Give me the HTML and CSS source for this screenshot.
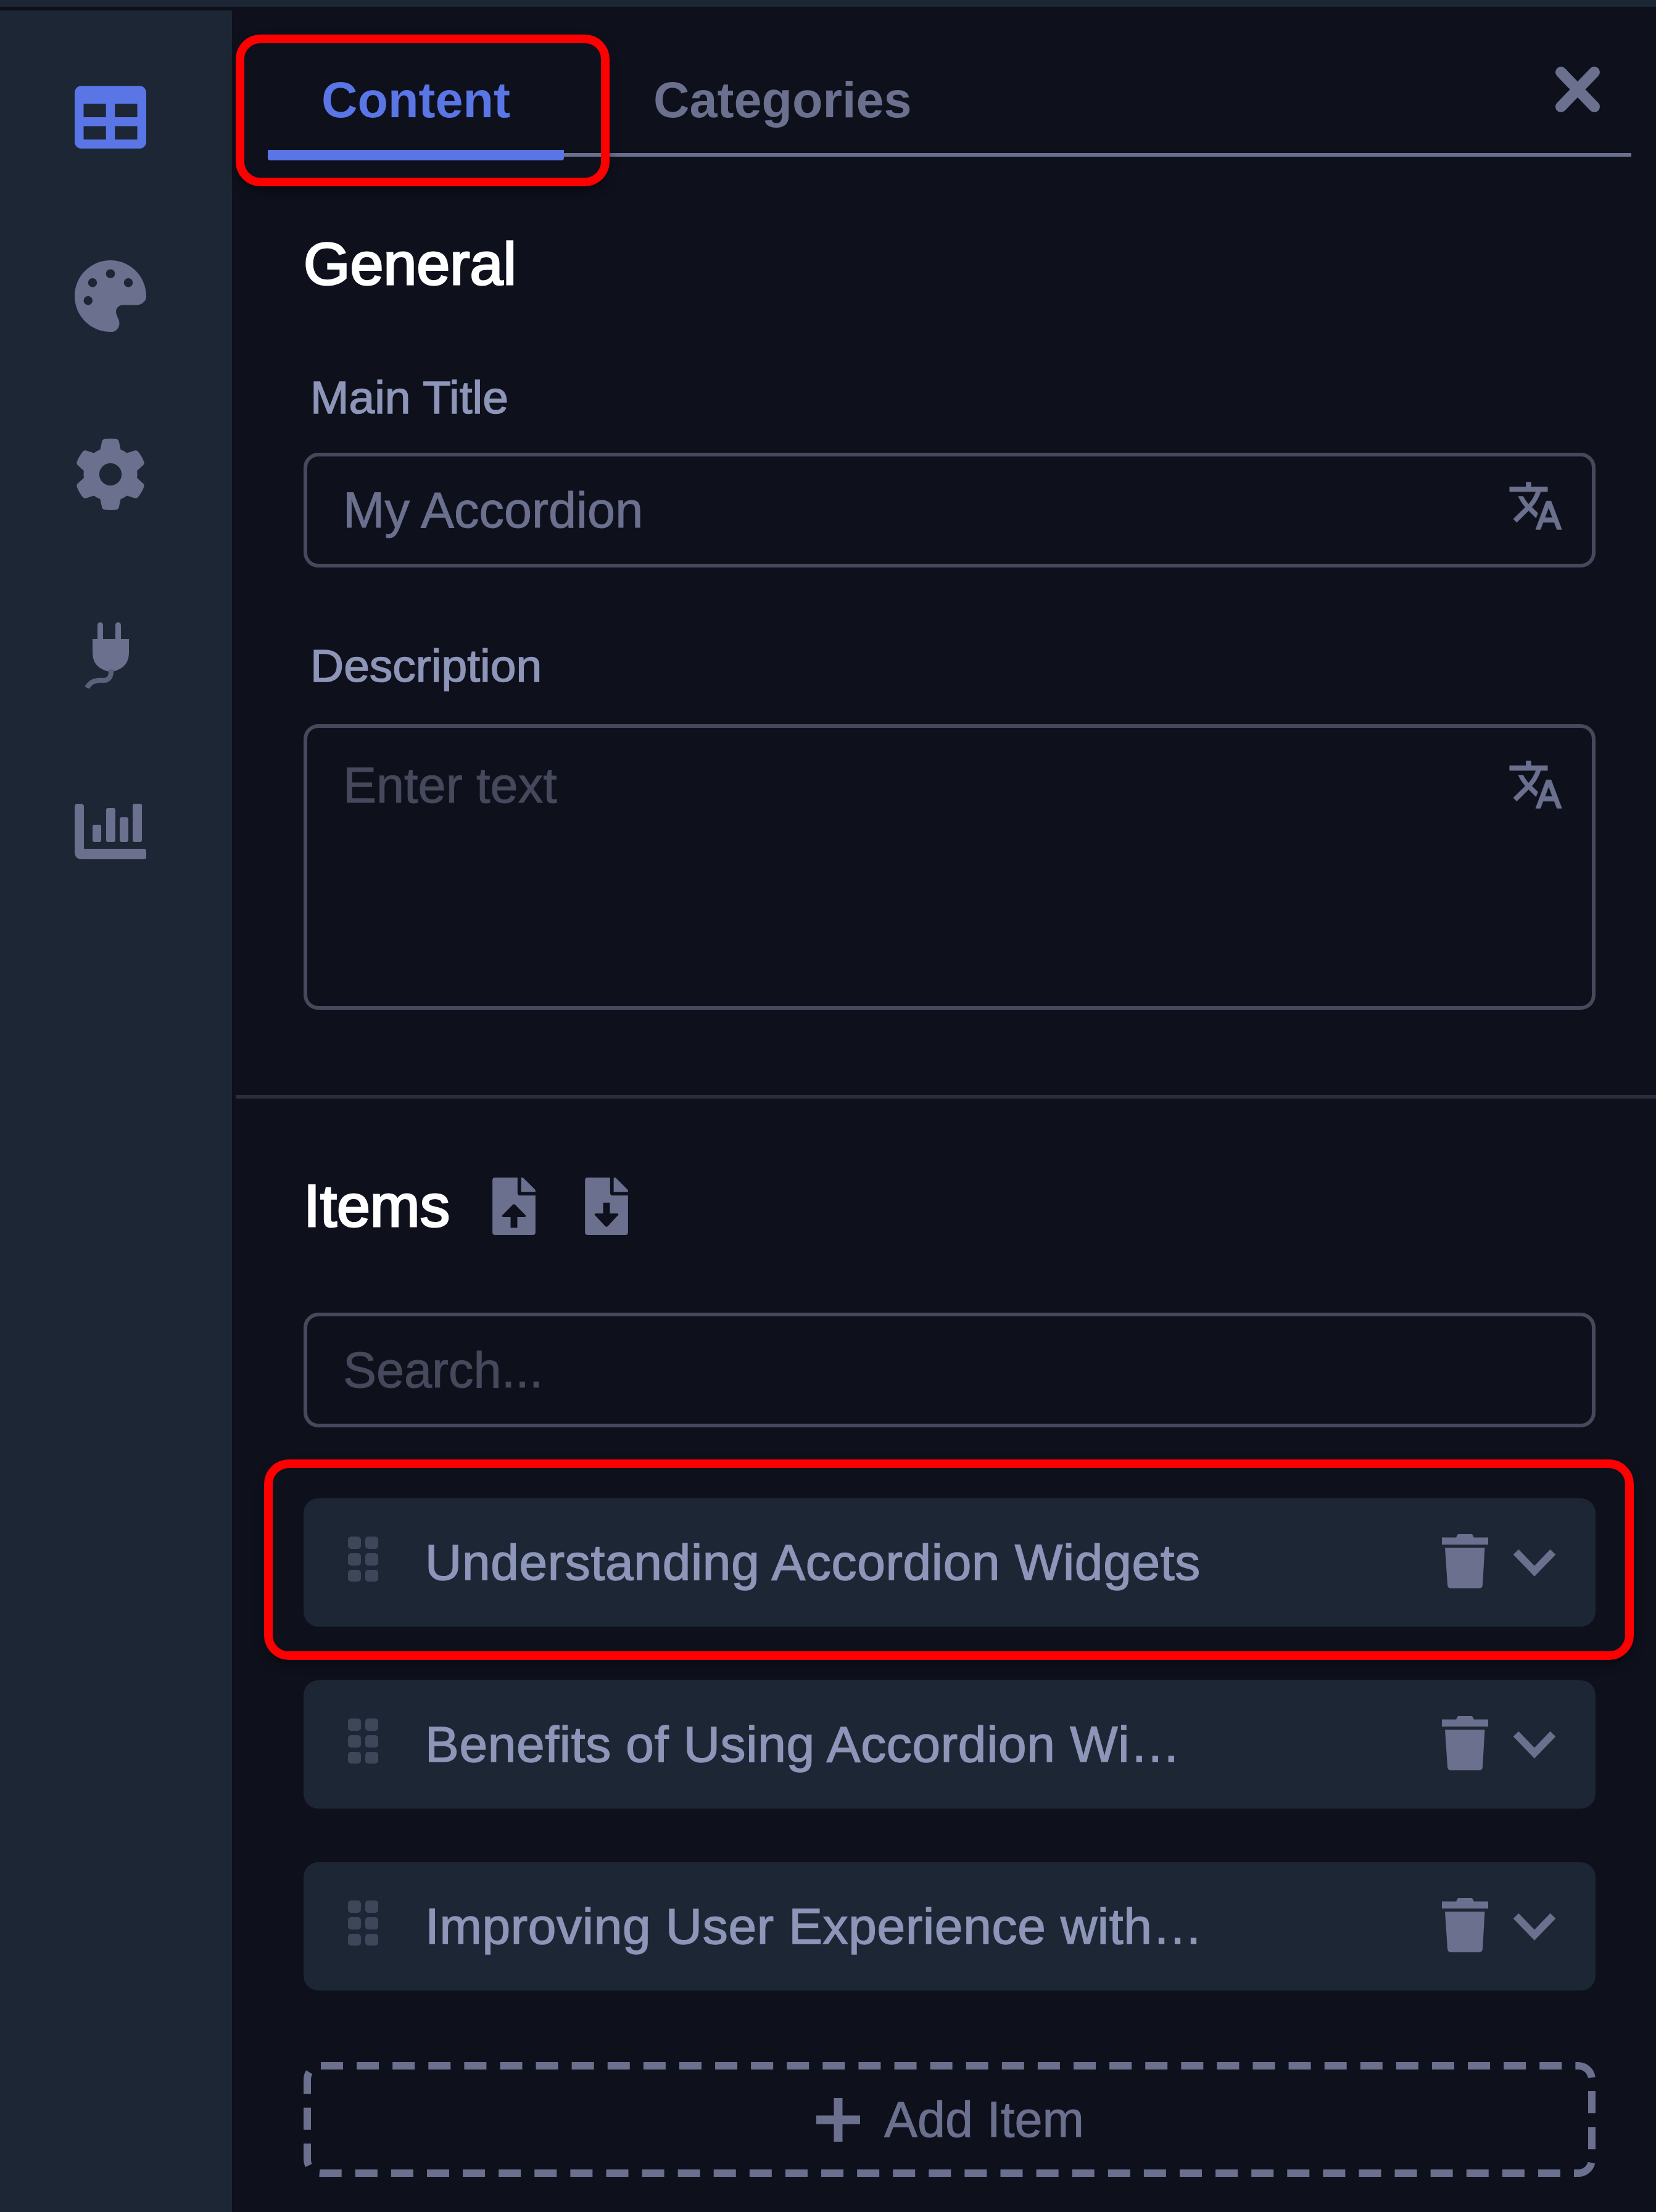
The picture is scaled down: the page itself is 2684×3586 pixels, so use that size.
FILE: index.html
```html
<!DOCTYPE html>
<html lang="en">
<head>
    <meta charset="UTF-8">
    <meta name="viewport" content="width=device-width, initial-scale=1.0">
    <title>Accordion Editor</title>
    <link rel="stylesheet" href="styles.css">
</head>
<body>
    <!-- shared icons -->
    <svg class="defs" aria-hidden="true">
        <symbol id="translate" viewBox="0 0 24 24">
            <path d="M12.87 15.07l-2.54-2.51.03-.03c1.74-1.94 2.98-4.17 3.71-6.53H17V4h-7V2H8v2H1v1.99h11.17C11.5 7.92 10.44 9.75 9 11.35 8.07 10.32 7.3 9.19 6.69 8h-2c.73 1.63 1.73 3.17 2.98 4.56l-5.09 5.02L4 19l5-5 3.11 3.11.76-2.04zM18.5 10h-2L12 22h2l1.12-3h4.75L21 22h2l-4.5-12zm-2.62 7l1.62-4.33L19.12 17h-3.24z"/>
        </symbol>
        <symbol id="grip" viewBox="0 0 58 74">
            <rect x="3" y="0" width="21" height="20" rx="5"/>
            <rect x="31" y="0" width="21" height="20" rx="5"/>
            <rect x="3" y="27" width="21" height="20" rx="5"/>
            <rect x="31" y="27" width="21" height="20" rx="5"/>
            <rect x="3" y="54" width="21" height="19" rx="5"/>
            <rect x="31" y="54" width="21" height="19" rx="5"/>
        </symbol>
        <symbol id="trash" viewBox="0 0 75 88">
            <path d="M0 5.5h23l3-5.5h23l3 5.5h23V17H0zM5 22h64.500l-3.500 60q-.4 6-6 6H15q-5.600 0-6-6z"/>
        </symbol>
        <symbol id="chevron" viewBox="0 0 70 46">
            <path d="M5 6l30 31 30-31" class="line"/>
        </symbol>
    </svg>

    <div class="topbar"></div>
    <div class="app">
        <aside class="sidebar">
            <svg class="active" viewBox="0 0 512 512"><path d="M464 32H48C21.490 32 0 53.490 0 80v352c0 26.510 21.490 48 48 48h416c26.510 0 48-21.490 48-48V80c0-26.510-21.490-48-48-48zM224 416H64v-96h160v96zm0-160H64v-96h160v96zm224 160H288v-96h160v96zm0-160H288v-96h160v96z"/></svg>
            <svg viewBox="0 0 512 512"><path d="M512 256c0 .9 0 1.800 0 2.700c-.4 36.500-33.600 61.300-70.100 61.300H344c-26.500 0-48 21.500-48 48c0 3.400 .4 6.700 1 9.900c2.100 10.200 6.500 20 10.800 29.900c6.100 13.800 12.100 27.500 12.100 42c0 31.800-21.600 60.700-53.400 62c-3.500 .1-7 .2-10.600 .2C114.600 512 0 397.400 0 256S114.600 0 256 0S512 114.600 512 256zM128 288a32 32 0 1 0 -64 0 32 32 0 1 0 64 0zm0-96a32 32 0 1 0 0-64 32 32 0 1 0 0 64zM288 96a32 32 0 1 0 -64 0 32 32 0 1 0 64 0zm96 96a32 32 0 1 0 0-64 32 32 0 1 0 0 64z"/></svg>
            <svg viewBox="0 0 512 512"><path d="M495.900 166.600c3.200 8.700 .5 18.400-6.400 24.600l-43.300 39.400c1.100 8.300 1.700 16.800 1.700 25.400s-.6 17.100-1.700 25.400l43.300 39.400c6.900 6.200 9.600 15.900 6.400 24.600c-4.400 11.900-9.700 23.300-15.800 34.300l-4.700 8.100c-6.600 11-14 21.400-22.100 31.200c-5.900 7.200-15.700 9.600-24.500 6.800l-55.700-17.700c-13.400 10.300-28.200 18.900-44 25.400l-12.500 57.100c-2 9.100-9 16.300-18.200 17.800c-13.800 2.300-28 3.500-42.500 3.500s-28.700-1.200-42.500-3.500c-9.200-1.500-16.200-8.700-18.200-17.800l-12.500-57.100c-15.800-6.500-30.600-15.100-44-25.400L83.100 425.900c-8.800 2.800-18.600 .3-24.500-6.800c-8.100-9.800-15.500-20.200-22.100-31.200l-4.700-8.100c-6.100-11-11.400-22.400-15.800-34.300c-3.200-8.700-.5-18.400 6.400-24.600l43.300-39.400C64.600 273.100 64 264.600 64 256s.6-17.100 1.700-25.400L22.400 191.200c-6.900-6.200-9.600-15.900-6.400-24.600c4.400-11.900 9.700-23.300 15.800-34.300l4.700-8.100c6.600-11 14-21.400 22.100-31.200c5.900-7.200 15.700-9.600 24.500-6.800l55.700 17.700c13.400-10.300 28.200-18.900 44-25.400l12.500-57.100c2-9.100 9-16.300 18.200-17.800C227.300 1.200 241.500 0 256 0s28.700 1.200 42.500 3.500c9.200 1.500 16.200 8.700 18.200 17.800l12.500 57.100c15.800 6.500 30.600 15.100 44 25.400l55.700-17.700c8.800-2.800 18.600-.3 24.500 6.800c8.100 9.800 15.500 20.200 22.100 31.200l4.700 8.100c6.100 11 11.400 22.400 15.800 34.300zM256 336a80 80 0 1 0 0-160 80 80 0 1 0 0 160z"/></svg>
            <svg viewBox="0 0 116 116">
                <path d="M37 13q0-5 4.500-5t4.500 5v23h-9zM66 13q0-5 4.500-5t4.500 5v23h-9zM29 35h59v22q0 18-14 26-9 5-15.500 5T43 83Q29 75 29 57z"/>
                <path class="cord" d="M59 84q1 18-12 18-20-2-27 12"/>
            </svg>
            <svg viewBox="0 0 116 116">
                <path d="M0 18q0-5 5-5h5q5 0 5 5v68h97q4 0 4 4v9q0 4-4 4H12Q0 103 0 91z"/>
                <rect x="29" y="47" width="14" height="28" rx="3"/>
                <rect x="51" y="20" width="15" height="55" rx="3"/>
                <rect x="73" y="35" width="14" height="40" rx="3"/>
                <rect x="94" y="13" width="15" height="62" rx="3"/>
            </svg>
        </aside>

        <main class="panel">
            <nav class="tabs">
                <a class="tab tab-active">Content</a>
                <a class="tab">Categories</a>
                <svg class="close" viewBox="0 0 74 80"><path d="M10 12l54 56M64 12L10 68"/></svg>
            </nav>

            <section class="section">
                <h2>General</h2>
                <label for="mainTitle">Main Title</label>
                <div class="field">
                    <input type="text" id="mainTitle" value="My Accordion">
                    <svg class="translate"><use href="#translate"/></svg>
                </div>
                <label for="description">Description</label>
                <div class="field field-area">
                    <textarea id="description" placeholder="Enter text"></textarea>
                    <svg class="translate"><use href="#translate"/></svg>
                </div>
            </section>

            <hr>

            <section class="section">
                <div class="heading">
                    <h2>Items</h2>
                    <svg class="file" viewBox="0 0 384 512"><path d="M24 0H224v136q0 24 24 24H384V488q0 24-24 24H24q-24 0-24-24V24Q0 0 24 0zM256 0h8q8 0 14 6l99 99q7 7 7 15v8H256zM162 352v96h60v-96h66q18-2 7-16l-91-92q-12-12-24 0l-91 92q-11 14 7 16z"/></svg>
                    <svg class="file" viewBox="0 0 384 512"><path d="M24 0H224v136q0 24 24 24H384V488q0 24-24 24H24q-24 0-24-24V24Q0 0 24 0zM256 0h8q8 0 14 6l99 99q7 7 7 15v8H256zM162 224v96H96q-18 2-7 16l91 98q12 12 24 0l91-98q11-14-7-16h-66v-96z"/></svg>
                </div>
                <input type="text" placeholder="Search...">

                <ul class="items">
                    <li class="item">
                        <svg class="grip"><use href="#grip"/></svg>
                        <span class="name">Understanding Accordion Widgets</span>
                        <svg class="trash"><use href="#trash"/></svg>
                        <svg class="chevron"><use href="#chevron"/></svg>
                    </li>
                    <li class="item">
                        <svg class="grip"><use href="#grip"/></svg>
                        <span class="name">Benefits of Using Accordion Wi…</span>
                        <svg class="trash"><use href="#trash"/></svg>
                        <svg class="chevron"><use href="#chevron"/></svg>
                    </li>
                    <li class="item">
                        <svg class="grip"><use href="#grip"/></svg>
                        <span class="name">Improving User Experience with…</span>
                        <svg class="trash"><use href="#trash"/></svg>
                        <svg class="chevron"><use href="#chevron"/></svg>
                    </li>
                </ul>

                <button class="add">
                    <svg class="dashes" viewBox="0 0 2094 186"><rect x="6" y="6" width="2082" height="174" rx="22" pathLength="770"/></svg>
                    <svg class="plus" viewBox="0 0 75 75"><path d="M37.500 2v71M2 37.500h71"/></svg>
                    <span>Add Item</span>
                </button>
            </section>
        </main>
    </div>

    <div class="highlight highlight-tab"></div>
    <div class="highlight highlight-item"></div>
</body>
</html>
```

FILE: styles.css
```css
* {
    box-sizing: border-box;
}

body {
    position: relative;
    width: 2684px;
    height: 3586px;
    margin: 0;
    overflow: hidden;
    background-color: #0e101c;
    color: #8d95b8;
    font-family: "Liberation Sans", Arial, sans-serif;
    font-size: 81px;
}

svg {
    display: block;
    flex-shrink: 0;
    fill: #6a708d;
}

.defs {
    position: absolute;
    width: 0;
    height: 0;
}

.topbar {
    height: 11px;
    margin-bottom: 6px;
    background-color: #1d2634;
}

.app {
    display: flex;
    height: 3569px;
}

/* Sidebar */
.sidebar {
    display: flex;
    flex-direction: column;
    gap: 173.5px;
    width: 376px;
    padding: 115px 0 0 121px;
    background-color: #1d2634;
}

.sidebar svg {
    width: 116px;
    height: 116px;
}

.sidebar .active {
    fill: #5a76e6;
}

.cord {
    fill: none;
    stroke: #5b617b;
    stroke-width: 8;
}

.panel {
    flex: 1;
}

/* Tabs */
.tabs {
    display: flex;
    gap: 58px;
    height: 237px;
    margin: 0 40px 0 58px;
    border-bottom: 6px solid #6a708d;
}

.tab {
    height: 243px;
    padding-top: 95px;
    color: #6a708d;
    font-size: 81px;
    font-weight: bold;
    line-height: 100px;
    padding-left: 87px;
}

.tab-active {
    width: 480px;
    padding-left: 0;
    text-align: center;
    color: #5a76e6;
    border-bottom: 17px solid #5a76e6;
    border-radius: 4px;
}

.close {
    width: 74px;
    height: 80px;
    margin: 88px 50px 0 auto;
    stroke: #6a708d;
    stroke-width: 18;
    stroke-linecap: round;
}

/* Sections */
.section {
    padding: 119px 98px 138px 116px;
}

h2 {
    margin: 0 0 121px;
    color: #fff;
    font-size: 97px;
    font-weight: normal;
    line-height: 110px;
    -webkit-text-stroke: 3px #fff;
}

hr {
    height: 6px;
    margin: 0 0 0 6px;
    border: none;
    background-color: #2a2d3a;
}

label {
    display: block;
    padding-left: 11px;
    margin-bottom: 50px;
    font-size: 75px;
    line-height: 80px;
    -webkit-text-stroke: 1.5px #8d95b8;
}

.field {
    position: relative;
    margin-bottom: 119px;
}

.field-area {
    margin: 55px 0 0;
}

input,
textarea {
    display: block;
    width: 100%;
    height: 186px;
    padding: 0 58px;
    border: 6px solid #45495b;
    border-radius: 24px;
    background: transparent;
    color: #6a708d;
    font: inherit;
    -webkit-text-stroke: 1px;
}

textarea {
    height: 463px;
    padding-top: 46px;
    line-height: 94px;
    resize: none;
}

::placeholder {
    color: #45495b;
}

.translate {
    position: absolute;
    top: 40px;
    right: 51px;
    width: 92px;
    height: 92px;
    stroke: #6a708d;
    stroke-width: 0.2;
}

.field-area .translate {
    top: 52px;
}

/* Items */
.heading {
    display: flex;
    align-items: center;
    gap: 80px;
    margin-bottom: 118px;
}

.heading h2 {
    width: 226px;
    margin-bottom: 0;
}

.file {
    width: 70px;
    height: 93px;
    fill-rule: evenodd;
}

.items {
    display: flex;
    flex-direction: column;
    gap: 87px;
    margin: 115px 0 116px;
    padding: 0;
    list-style: none;
}

.item {
    display: flex;
    align-items: center;
    height: 208px;
    padding: 0 64px 0 69px;
    border-radius: 24px;
    background-color: #1d2634;
}

.name {
    flex: 1;
    font-size: 82px;
    letter-spacing: 0.7px;
    white-space: nowrap;
    -webkit-text-stroke: 1.5px #8d95b8;
}

.grip {
    width: 58px;
    height: 74px;
    margin: 0 70px 10px 0;
    fill: #3d4759;
}

.trash {
    width: 75px;
    height: 88px;
    margin: 0 40px 5px 0;
}

.chevron {
    width: 70px;
    height: 46px;
}

.line {
    fill: none;
    stroke: #6a708d;
    stroke-width: 12;
}

.add {
    position: relative;
    display: flex;
    justify-content: center;
    align-items: center;
    gap: 37px;
    width: 100%;
    height: 186px;
    padding: 0;
    border: none;
    background: none;
    color: #6a708d;
    font: inherit;
    -webkit-text-stroke: 1px;
}

.dashes {
    position: absolute;
    inset: 0;
    fill: none;
    stroke: #6a708d;
    stroke-width: 12;
    stroke-dasharray: 6.2 3.8;
}

.plus {
    width: 75px;
    height: 75px;
    stroke: #6a708d;
    stroke-width: 14;
}

/* Red markers over the page */
.highlight {
    position: absolute;
    border: 14px solid #ff0000;
    border-radius: 40px;
    box-shadow: 0 8px 16px rgba(0, 0, 0, 0.35);
}

.highlight-tab {
    left: 382px;
    top: 56px;
    width: 606px;
    height: 246px;
}

.highlight-item {
    left: 428px;
    top: 2366px;
    width: 2220px;
    height: 325px;
}
```
